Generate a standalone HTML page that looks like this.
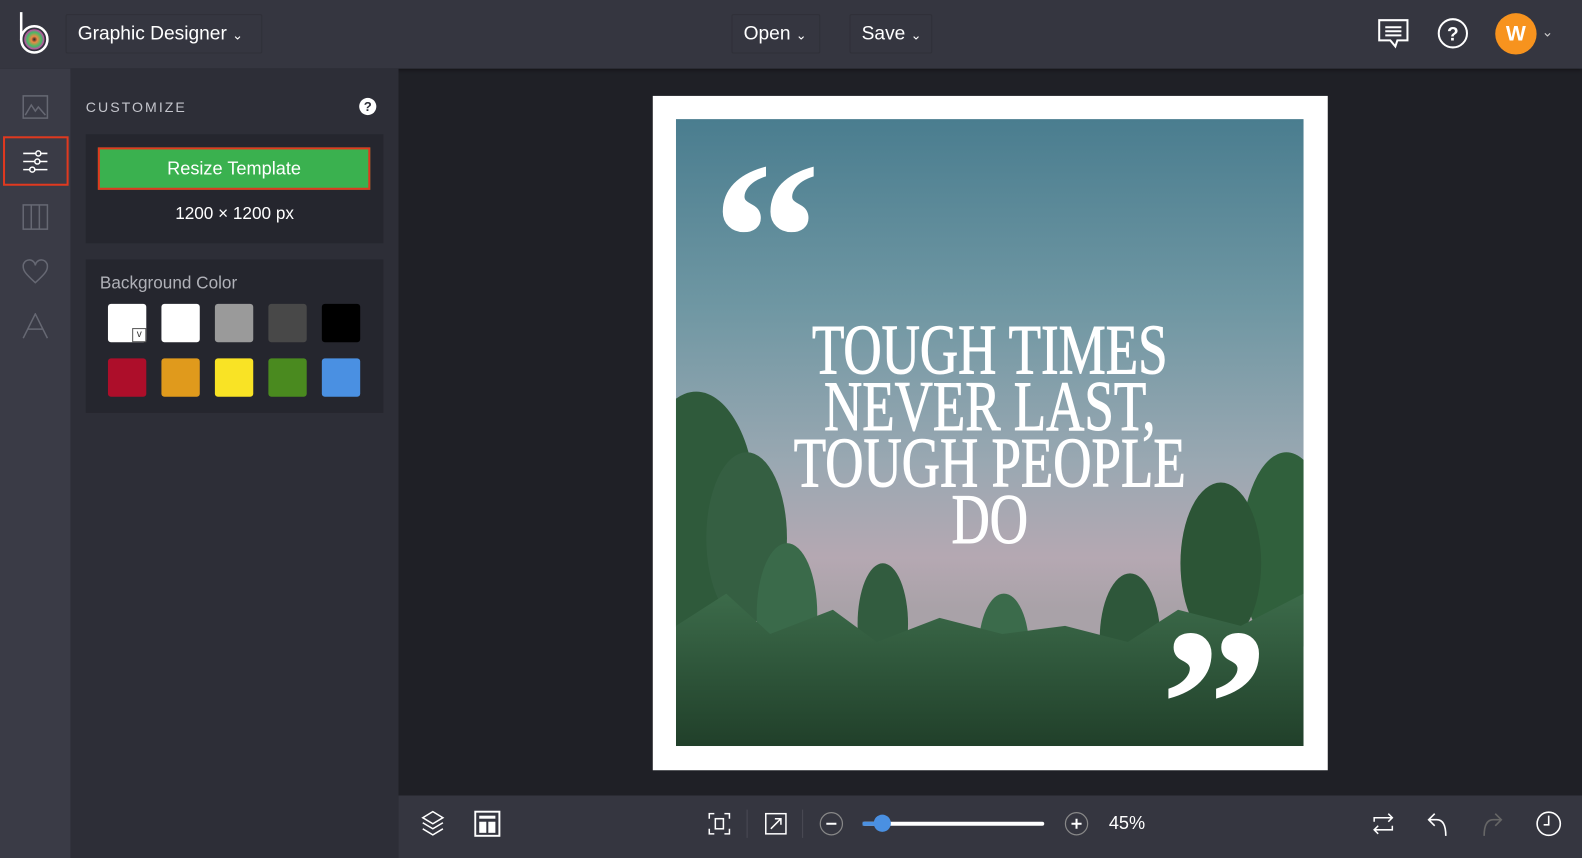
<!DOCTYPE html>
<html><head><style>
*{margin:0;padding:0;box-sizing:border-box}
body{width:1582px;height:850px;background:#1f2026;font-family:"Liberation Sans",sans-serif;position:relative;overflow:hidden}
#w{position:absolute;left:0;top:0;width:1568px;height:842px;transform:scale(1.00893,1.0095);transform-origin:0 0}
.top{position:absolute;left:0;top:0;width:1568px;height:68px;background:#353640;box-shadow:0 2px 4px rgba(0,0,0,.4)}
.btn{position:absolute;top:14px;height:39px;border:1px solid #2f3038;color:#fff;font-size:19px;line-height:37px;padding:0 11px;border-radius:2px;white-space:nowrap}
.rail{position:absolute;left:0;top:68px;width:70px;height:782px;background:#3a3b46}
.panel{position:absolute;left:70px;top:68px;width:325px;height:782px;background:#2d2e37}
.card{position:absolute;background:#25262e}
.sw{position:absolute;width:38px;height:38px;border-radius:3px}
.bottom{position:absolute;left:395px;top:788px;width:1187px;height:62px;background:#353640}
.ic{position:absolute}
.q{position:absolute;color:#fff;font-family:"Liberation Serif",serif;font-weight:bold;font-size:215px;line-height:215px}
.bl{position:absolute;border-radius:50%}
</style></head><body><div id="w">
<div class="top">
 <svg class="ic" style="left:17px;top:10px" width="36" height="46" viewBox="0 0 36 46"><line x1="4" y1="2" x2="4" y2="30" stroke="#fff" stroke-width="2.5"/><circle cx="17" cy="29" r="13" fill="none" stroke="#fff" stroke-width="2.5"/><circle cx="17" cy="29" r="10" fill="url(#g)"/><defs><radialGradient id="g"><stop offset="0" stop-color="#222"/><stop offset=".3" stop-color="#e84"/><stop offset=".7" stop-color="#4b6"/><stop offset="1" stop-color="#c4a"/></radialGradient></defs></svg>
 <div class="btn" style="left:65px;width:195px">Graphic Designer <span style="font-size:13px">&#8964;</span></div>
 <div class="btn" style="left:725px;width:88px">Open <span style="font-size:13px">&#8964;</span></div>
 <div class="btn" style="left:842px;width:82px">Save <span style="font-size:13px">&#8964;</span></div>
 <svg class="ic" style="left:1364px;top:17px" width="34" height="34" viewBox="0 0 34 34" fill="none" stroke="#fff" stroke-width="2"><path d="M3 3h28v20H21l-2 6-5-6H3z"/><path d="M9 10h16M9 14h16M9 18h16"/></svg>
 <svg class="ic" style="left:1424px;top:17px" width="32" height="32" viewBox="0 0 32 32"><circle cx="16" cy="16" r="14" fill="none" stroke="#fff" stroke-width="2"/><text x="16" y="23" text-anchor="middle" fill="#fff" font-size="19" font-weight="bold" font-family="Liberation Sans">?</text></svg>
 <div style="position:absolute;left:1482px;top:13px;width:41px;height:41px;border-radius:50%;background:#f7931e;color:#fff;font-weight:bold;font-size:21px;text-align:center;line-height:41px">W</div>
 <div style="position:absolute;left:1528px;top:23px;color:#ccc;font-size:14px">&#8964;</div>
</div>
<div class="rail">
 <svg class="ic" style="left:22px;top:26px" width="26" height="24" viewBox="0 0 26 24" fill="none" stroke="#666873" stroke-width="1.5"><rect x="1" y="1" width="24" height="22"/><path d="M3 20l6-10 4 6 3-4 7 8"/></svg>
 <div style="position:absolute;left:3px;top:67px;width:65px;height:49px;border:2px solid #e0391f"></div>
 <svg class="ic" style="left:22px;top:80px" width="26" height="24" viewBox="0 0 26 24" fill="none" stroke="#fff" stroke-width="1.5"><path d="M1 4h24M1 12h24M1 20h24"/><circle cx="16" cy="4" r="2.5" fill="#3a3b46"/><circle cx="15" cy="12" r="2.5" fill="#3a3b46"/><circle cx="10" cy="20" r="2.5" fill="#3a3b46"/></svg>
 <svg class="ic" style="left:22px;top:134px" width="26" height="26" viewBox="0 0 26 26" fill="none" stroke="#666873" stroke-width="1.5"><rect x="1" y="1" width="24" height="24"/><path d="M9 1v24M17 1v24"/></svg>
 <svg class="ic" style="left:22px;top:188px" width="26" height="26" viewBox="0 0 26 26" fill="none" stroke="#666873" stroke-width="1.5"><path d="M13 24C3 15 1 12 1 8a6 6 0 0112-1 6 6 0 0112 1c0 4-2 7-12 16z"/></svg>
 <svg class="ic" style="left:22px;top:242px" width="26" height="26" viewBox="0 0 26 26" fill="none" stroke="#666873" stroke-width="1.5"><path d="M1 25L13 1l12 24M6 16h14"/></svg>
</div>
<div class="panel">
 <div style="position:absolute;left:15px;top:30px;color:#c4c5cc;font-size:14px;letter-spacing:2px">CUSTOMIZE</div>
 <div style="position:absolute;left:286px;top:29px;width:17px;height:17px;border-radius:50%;background:#fff;color:#2d2e37;font-size:13px;font-weight:bold;text-align:center;line-height:17px">?</div>
 <div class="card" style="left:15px;top:65px;width:295px;height:108px">
  <div style="position:absolute;left:12px;top:13px;width:270px;height:42px;background:#3ab14f;border:2px solid #e0391f;color:#fff;font-size:18px;text-align:center;line-height:38px">Resize Template</div>
  <div style="position:absolute;left:0;top:69px;width:295px;text-align:center;color:#fff;font-size:17px">1200 × 1200 px</div>
 </div>
 <div class="card" style="left:15px;top:189px;width:295px;height:152px">
  <div style="position:absolute;left:14px;top:14px;color:#b0b1b8;font-size:17px">Background Color</div>
  <div class="sw" style="left:22px;top:44px;background:#fff"><div style="position:absolute;right:0;bottom:0;width:14px;height:14px;border:1px solid #555;font-size:10px;color:#333;text-align:center;line-height:12px">v</div></div>
  <div class="sw" style="left:75px;top:44px;background:#fff"></div>
  <div class="sw" style="left:128px;top:44px;background:#9a9a9a"></div>
  <div class="sw" style="left:181px;top:44px;background:#484848"></div>
  <div class="sw" style="left:234px;top:44px;background:#000"></div>
  <div class="sw" style="left:22px;top:98px;background:#ad0e2a"></div>
  <div class="sw" style="left:75px;top:98px;background:#e09a1c"></div>
  <div class="sw" style="left:128px;top:98px;background:#f9e325"></div>
  <div class="sw" style="left:181px;top:98px;background:#4a8a1f"></div>
  <div class="sw" style="left:234px;top:98px;background:#4a90e2"></div>
 </div>
</div>
<div style="position:absolute;left:647px;top:95px;width:669px;height:668px;background:#fff">
 <div style="position:absolute;left:23px;top:23px;width:622px;height:621px;overflow:hidden;background:linear-gradient(180deg,#4a7d8f 0%,#6f97a3 30%,#9aa8b2 55%,#b5a8b2 70%,#a9a2a8 78%)">
  <div class="bl" style="left:-40px;top:270px;width:120px;height:240px;background:#2f5a3b"></div>
  <div class="bl" style="left:30px;top:330px;width:80px;height:170px;background:#355f42"></div>
  <div class="bl" style="left:560px;top:330px;width:90px;height:200px;background:#30603c"></div>
  <div class="bl" style="left:500px;top:360px;width:80px;height:160px;background:#2c5536"></div>
  <div class="bl" style="left:80px;top:420px;width:60px;height:140px;background:#3a6a4a"></div>
  <div class="bl" style="left:180px;top:440px;width:50px;height:120px;background:#325c3f"></div>
  <div class="bl" style="left:300px;top:470px;width:50px;height:110px;background:#3b6b4b"></div>
  <div class="bl" style="left:420px;top:450px;width:60px;height:130px;background:#2e573a"></div>
  <div style="position:absolute;left:0;top:470px;width:622px;height:160px;background:linear-gradient(180deg,#3c6b4a,#1f3d28);clip-path:polygon(0 20%,8% 0,15% 25%,25% 10%,32% 30%,42% 15%,52% 25%,62% 20%,72% 30%,80% 10%,90% 20%,100% 0,100% 100%,0 100%)"></div>
  <div class="q" style="left:36px;top:10px">&#8220;</div>
  <div class="q" style="left:480px;top:472px">&#8221;</div>
  <div style="position:absolute;left:0;top:202px;width:622px;text-align:center;color:#fff;font-family:'Liberation Serif',serif;font-size:70px;line-height:56px;transform:scaleX(.75);-webkit-text-stroke:1px #fff">TOUGH TIMES<br>NEVER LAST,<br>TOUGH PEOPLE<br>DO</div>
 </div>
</div>
<div class="bottom">
 <svg class="ic" style="left:22px;top:14px" width="24" height="28" viewBox="0 0 24 28" fill="none" stroke="#fff" stroke-width="1.5"><path d="M12 2l10 6-10 6L2 8z"/><path d="M2 13l10 6 10-6M2 19l10 6 10-6"/></svg>
 <svg class="ic" style="left:75px;top:15px" width="26" height="26" viewBox="0 0 26 26"><rect x="1" y="1" width="24" height="24" fill="none" stroke="#fff" stroke-width="2"/><rect x="5" y="5" width="16" height="3" fill="#fff"/><rect x="5" y="11" width="7" height="11" fill="#fff"/><rect x="14" y="11" width="7" height="11" fill="#fff"/></svg>
 <svg class="ic" style="left:307px;top:17px" width="22" height="22" viewBox="0 0 22 22" fill="none" stroke="#fff" stroke-width="1.5"><path d="M1 6V1h5M16 1h5v5M21 16v5h-5M6 21H1v-5"/><rect x="7" y="6" width="8" height="10"/></svg>
 <div style="position:absolute;left:345px;top:14px;width:1px;height:28px;background:#4a4b55"></div>
 <svg class="ic" style="left:363px;top:17px" width="22" height="22" viewBox="0 0 22 22" fill="none" stroke="#fff" stroke-width="1.5"><rect x="1" y="1" width="20" height="20"/><path d="M6 16L16 6M10 6h6v6"/></svg>
 <div style="position:absolute;left:400px;top:14px;width:1px;height:28px;background:#4a4b55"></div>
 <svg class="ic" style="left:417px;top:16px" width="24" height="24" viewBox="0 0 24 24" fill="none" stroke="#888" stroke-width="1.2"><circle cx="12" cy="12" r="11"/><path d="M7 12h10" stroke="#fff" stroke-width="2"/></svg>
 <div style="position:absolute;left:460px;top:26px;width:180px;height:4px;background:#fff;border-radius:2px"></div>
 <div style="position:absolute;left:460px;top:26px;width:20px;height:4px;background:#4a90e2"></div>
 <div style="position:absolute;left:471px;top:19px;width:17px;height:17px;border-radius:50%;background:#4a90e2"></div>
 <svg class="ic" style="left:660px;top:16px" width="24" height="24" viewBox="0 0 24 24" fill="none" stroke="#888" stroke-width="1.2"><circle cx="12" cy="12" r="11"/><path d="M7 12h10M12 7v10" stroke="#fff" stroke-width="2"/></svg>
 <div style="position:absolute;left:704px;top:17px;color:#fff;font-size:18px">45%</div>
 <svg class="ic" style="left:965px;top:16px" width="22" height="24" viewBox="0 0 22 24" fill="none" stroke="#fff" stroke-width="1.5"><path d="M2 10V6h18M16 2l4 4-4 4M20 14v4H2M6 14l-4 4 4 4"/></svg>
 <svg class="ic" style="left:1019px;top:16px" width="22" height="26" viewBox="0 0 22 26" fill="none" stroke="#fff" stroke-width="1.6"><path d="M8 2L2 8l6 6M2 8h8c6 0 9 5 9 16"/></svg>
 <svg class="ic" style="left:1073px;top:16px" width="22" height="26" viewBox="0 0 22 26" fill="none" stroke="#666" stroke-width="1.6"><path d="M14 2l6 6-6 6M20 8h-8C6 8 3 13 3 24"/></svg>
 <svg class="ic" style="left:1127px;top:15px" width="26" height="26" viewBox="0 0 26 26" fill="none" stroke="#fff" stroke-width="1.6"><circle cx="13" cy="13" r="11.5"/><path d="M13 5v9H8"/></svg>
</div>
</div></body></html>
